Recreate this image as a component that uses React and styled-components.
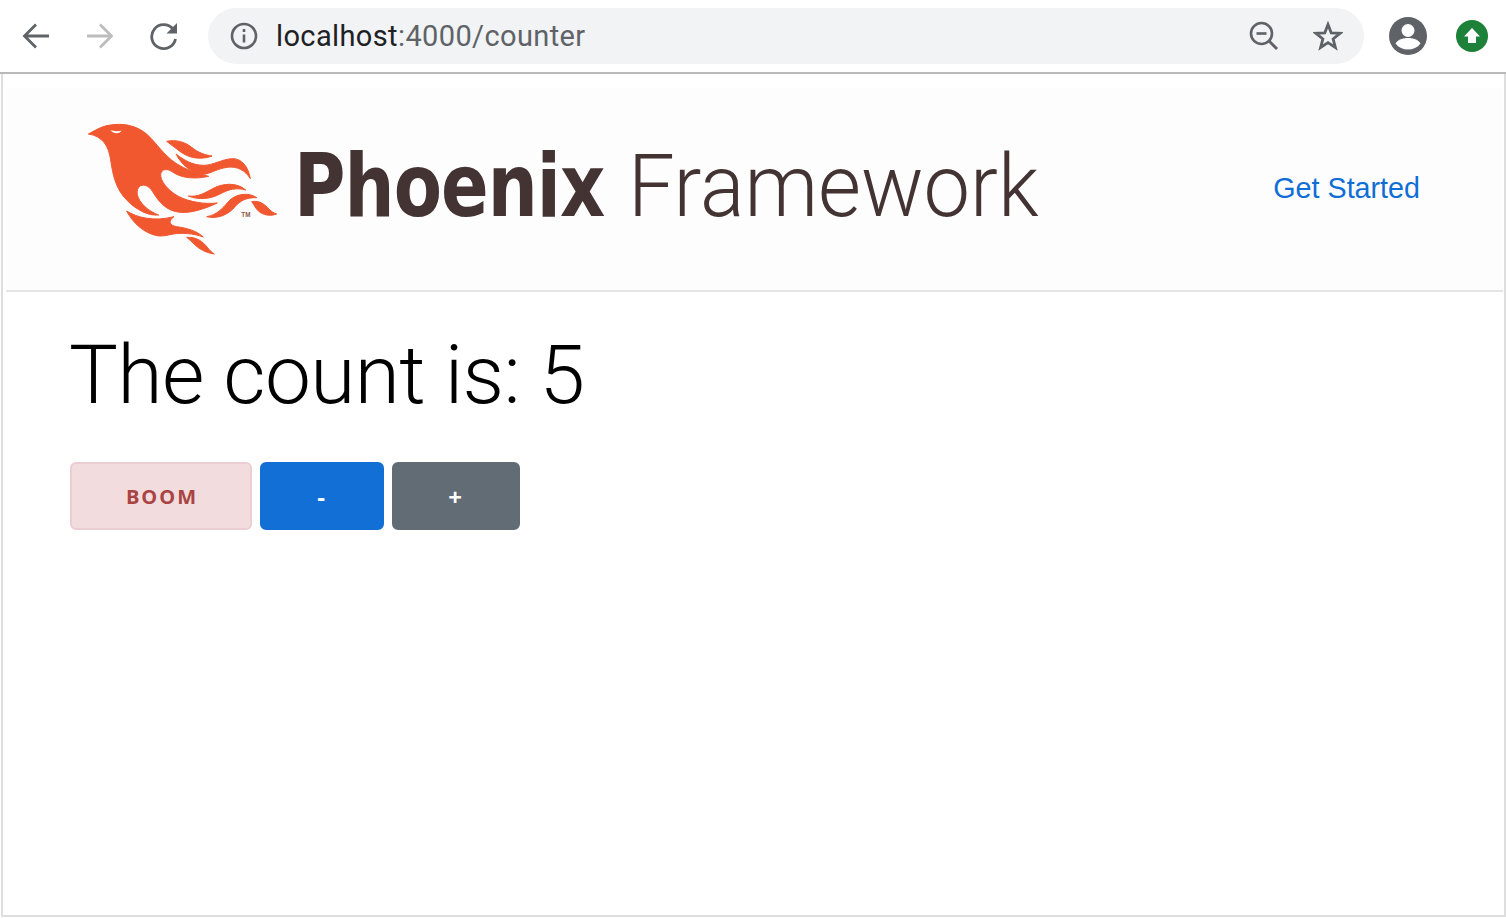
import React from "react";
import styled, { createGlobalStyle } from "styled-components";

const Global = createGlobalStyle`
  html, body { margin: 0; padding: 0; background: #fff; }
  #root { width: 1506px; height: 918px; overflow: hidden; }
`;

const Page = styled.div`
  width: 1506px;
  height: 918px;
  display: flex;
  flex-direction: column;
  font-family: "Liberation Sans", Arial, sans-serif;
`;

const Toolbar = styled.div`
  height: 72px;
  flex: none;
  display: flex;
  align-items: center;
  padding: 0 18px 0 4px;
  border-bottom: 2px solid #b9b9b9;
  background: #fff;
`;

const NavButton = styled.div`
  width: 64px;
  height: 56px;
  flex: none;
  display: flex;
  align-items: center;
  justify-content: center;
`;

const Omnibox = styled.div`
  width: 1156px;
  height: 56px;
  flex: none;
  margin-left: 12px;
  padding: 0 21px 0 22px;
  box-sizing: border-box;
  display: flex;
  align-items: center;
  border-radius: 28px;
  background: #f1f3f4;
`;

const Url = styled.div`
  flex: 1;
  margin-left: 18px;
  font: 400 29px "Roboto", sans-serif;
  letter-spacing: 0.38px;
  color: #5f6368;
  white-space: nowrap;
`;

const Host = styled.span`
  color: #202124;
`;

const OmniIcon = styled.div`
  display: flex;
  margin-left: ${(p) => p.$gap || 0}px;
`;

const ToolbarEnd = styled.div`
  display: flex;
  align-items: center;
  gap: 29px;
  margin-left: 25px;
`;

const Viewport = styled.div`
  flex: 1;
  margin: 0 0 1px 1px;
  border-left: 2px solid #dedede;
  border-right: 2px solid #dedede;
  border-bottom: 2px solid #dedede;
  padding-top: 14px;
  display: flex;
  flex-direction: column;
`;

const Header = styled.header`
  height: 202px;
  flex: none;
  margin: 0 1px 0 3px;
  padding: 0 83px 0 64px;
  display: flex;
  align-items: center;
  justify-content: space-between;
  background: #fdfdfd;
  border-bottom: 2px solid #e5e5e5;
`;

const Logo = styled.div`
  display: flex;
  align-items: center;
`;

const Wordmark = styled.div`
  display: flex;
  align-items: baseline;
  margin-left: 4px;
  color: #443333;
  white-space: nowrap;
  transform: translateY(-4px);
`;

const Bold = styled.span`
  display: inline-block;
  font: 700 87px "DejaVu Sans", sans-serif;
  font-stretch: condensed;
  transform: scaleX(0.897);
  transform-origin: left center;
  width: 306px;
  letter-spacing: -1px;
`;

const Light = styled.span`
  display: inline-block;
  font: 300 88px "Roboto", sans-serif;
  transform: scaleX(0.943);
  transform-origin: left center;
  width: 406px;
  margin-left: 28px;
`;

const NavLink = styled.a`
  font: 400 28.7px "Liberation Sans", Arial, sans-serif;
  color: #0f6ed6;
  text-decoration: none;
  transform: translateY(-1px);
`;

const Main = styled.main`
  padding: 28px 0 0 66px;
`;

const Title = styled.h1`
  margin: 0;
  font: 300 82px/110px "Roboto", sans-serif;
  letter-spacing: -0.55px;
  color: #000;
`;

const Buttons = styled.div`
  display: flex;
  gap: 8px;
  margin-top: 32px;
  margin-left: 1px;
`;

const Button = styled.button`
  height: 68px;
  width: ${(p) => p.$w}px;
  box-sizing: border-box;
  padding: 0 0 0 ${(p) => p.$inset || 0}px;
  border: 2px solid ${(p) => p.$border};
  border-radius: 6px;
  background: ${(p) => p.$bg};
  color: ${(p) => p.$fg};
  font: 700 ${(p) => p.$size || 20}px "Open Sans", sans-serif;
  letter-spacing: 2px;
`;

const Bird = () => (
  <svg width="220" height="155" viewBox="0 0 660 465" style={{ marginTop: -4 }}>
    <g fill="#f1582f" stroke="#f1582f" strokeWidth="3" strokeLinejoin="round">
      <path d="M55 72C75 62 92 50 115 46C160 38 200 46 232 74C262 102 278 132 318 160C345 178 380 190 416 199C375 208 335 205 308 186C292 175 276 176 272 192C270 212 292 240 325 259C360 277 405 283 442 279C405 296 365 310 330 307C290 303 268 278 248 245C238 228 218 218 206 232C194 248 206 276 232 296C242 304 254 310 266 315C235 318 200 300 172 272C135 236 128 190 122 150C116 108 98 78 55 72Z" />
      <path d="M290 94C315 88 345 95 365 112C384 128 405 135 426 138C395 150 360 145 335 128C320 117 305 105 290 94Z" />
      <path d="M318 132C342 150 365 165 400 166C430 166 455 148 485 146C515 144 535 170 541 206C525 180 500 168 472 172C440 176 420 192 400 193C365 190 335 165 318 132Z" />
      <path d="M355 258C385 262 405 248 430 235C458 220 500 216 527 240C500 232 475 238 450 252C420 268 385 270 355 258Z" />
      <path d="M410 320C440 315 458 295 475 275C495 252 535 245 560 263C530 262 510 272 495 290C475 315 440 328 410 320Z" />
      <path d="M545 275C570 270 585 285 598 298C605 305 612 310 620 312C595 322 570 312 558 295C554 288 550 281 545 275Z" />
      <path d="M170 303C200 322 250 336 312 320C295 332 296 346 320 350C350 354 380 362 400 381C370 370 335 368 310 372C290 376 275 380 260 377C220 368 188 338 170 303Z" />
      <path d="M350 382C380 380 400 396 412 412C418 420 425 427 433 432C405 428 385 415 372 402C365 395 358 388 350 382Z" />
    </g>
    <path d="M121 61C132 64 145 64 155 62C150 70 133 74 121 61Z" fill="#fff" />
    <text x="514" y="322" fontFamily="Liberation Sans" fontWeight="700" fontSize="19" fill="#8a5a4a">TM</text>
  </svg>
);

const ICON = "#5f6368";

const Back = () => (
  <svg width="30" height="30" viewBox="0 0 30 30" fill="none" stroke={ICON} strokeWidth="2.8">
    <path d="M28 15H4M15 3.5L3.5 15L15 26.5" />
  </svg>
);

const Forward = () => (
  <svg width="30" height="30" viewBox="0 0 30 30" fill="none" stroke="#bdbdbd" strokeWidth="2.8">
    <path d="M2 15H26M15 3.5L26.5 15L15 26.5" />
  </svg>
);

const Reload = () => (
  <svg width="30" height="30" viewBox="0 0 30 30">
    <path d="M24 8A12 12 0 1 0 26.500 18" fill="none" stroke={ICON} strokeWidth="2.8" />
    <path d="M28 2V12.500H17.500Z" fill={ICON} />
  </svg>
);

const Info = () => (
  <svg width="28" height="28" viewBox="0 0 28 28" fill="none">
    <circle cx="14" cy="14" r="12" stroke={ICON} strokeWidth="2.6" />
    <path d="M14 12.500V20.500" stroke={ICON} strokeWidth="2.6" />
    <path d="M14 7V10" stroke={ICON} strokeWidth="2.6" />
  </svg>
);

const ZoomOut = () => (
  <svg width="30" height="30" viewBox="0 0 30 30" fill="none" stroke={ICON} strokeWidth="2.6">
    <circle cx="12.500" cy="12.500" r="10.500" />
    <path d="M7.500 12.500H17.500" />
    <path d="M20 20L28 28" strokeWidth="3" />
  </svg>
);

const Star = () => (
  <svg width="30" height="30" viewBox="0 0 30 30" fill="none" stroke={ICON} strokeWidth="2.800">
    <path d="M15 3.500L18.200 11.800L27 12.300L20.100 17.900L22.400 26.500L15 21.700L7.600 26.500L9.900 17.900L3 12.300L11.800 11.800Z" />
  </svg>
);

const Avatar = () => (
  <svg width="38" height="38" viewBox="0 0 38 38">
    <circle cx="19" cy="19" r="19" fill={ICON} />
    <circle cx="19" cy="13.500" r="6.500" fill="#fff" />
    <path d="M6.500 26.500C10 21.500 15 21 19 21C23 21 28 21.500 31.500 26.500C28.500 30.500 24 32.500 19 32.500C14 32.500 9.500 30.500 6.500 26.500Z" fill="#fff" />
  </svg>
);

const Update = () => (
  <svg width="32" height="32" viewBox="0 0 32 32">
    <circle cx="16" cy="16" r="16" fill="#1e8139" />
    <path d="M16 8L24 16.500H20V23H12V16.500H8Z" fill="#fff" />
  </svg>
);

export default function App() {
  return (
    <Page>
      <Global />
      <Toolbar>
        <NavButton><Back /></NavButton>
        <NavButton><Forward /></NavButton>
        <NavButton><Reload /></NavButton>
        <Omnibox>
          <Info />
          <Url><Host>localhost</Host>:4000/counter</Url>
          <OmniIcon><ZoomOut /></OmniIcon>
          <OmniIcon $gap={34}><Star /></OmniIcon>
        </Omnibox>
        <ToolbarEnd>
          <Avatar />
          <Update />
        </ToolbarEnd>
      </Toolbar>
      <Viewport>
        <Header>
          <Logo>
            <Bird />
            <Wordmark>
              <Bold>Phoenix</Bold>
              <Light>Framework</Light>
            </Wordmark>
          </Logo>
          <NavLink href="#">Get Started</NavLink>
        </Header>
        <Main>
          <Title>The count is: 5</Title>
          <Buttons>
            <Button $w={182} $inset={2} $bg="#f2dcde" $border="#eccdd1" $fg="#a94442">BOOM</Button>
            <Button $w={124} $size={24} $bg="#126fd6" $border="#126fd6" $fg="#fff">-</Button>
            <Button $w={128} $size={24} $bg="#626c75" $border="#626c75" $fg="#fff">+</Button>
          </Buttons>
        </Main>
      </Viewport>
    </Page>
  );
}
